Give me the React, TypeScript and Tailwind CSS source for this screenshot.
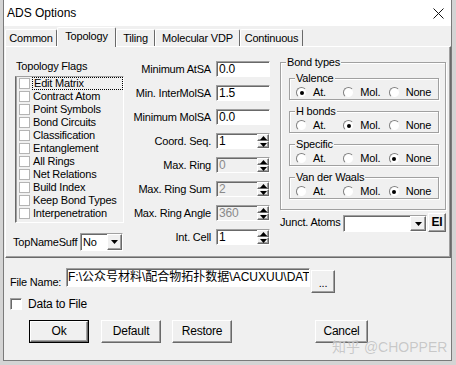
import type { ReactNode } from 'react';

const sunken =
  'border border-t-[#a0a0a0] border-l-[#a0a0a0] border-r-white border-b-white shadow-[inset_1px_1px_0_#696969]';
const raised =
  'border border-t-white border-l-white border-r-[#696969] border-b-[#696969] shadow-[inset_-1px_-1px_0_#a0a0a0]';

const flags = [
  'Edit Matrix',
  'Contract Atom',
  'Point Symbols',
  'Bond Circuits',
  'Classification',
  'Entanglement',
  'All Rings',
  'Net Relations',
  'Build Index',
  'Keep Bond Types',
  'Interpenetration',
];

const fields = [
  { label: 'Minimum AtSA', value: '0.0' },
  { label: 'Min. InterMolSA', value: '1.5' },
  { label: 'Minimum MolSA', value: '0.0' },
  { label: 'Coord. Seq.', value: '1', spin: true },
  { label: 'Max. Ring', value: '0', spin: true, disabled: true },
  { label: 'Max. Ring Sum', value: '2', spin: true, disabled: true },
  { label: 'Max. Ring Angle', value: '360', spin: true, disabled: true },
  { label: 'Int. Cell', value: '1', spin: true },
];

// which radio is checked in each bond group: 0 At., 1 Mol., 2 None
const bonds = [
  { title: 'Valence', on: 0 },
  { title: 'H bonds', on: 1 },
  { title: 'Specific', on: 2 },
  { title: 'Van der Waals', on: 2 },
];

const tabs = [
  { name: 'Common', w: 'w-[52px]' },
  { name: 'Topology', w: 'w-[59px]', active: true },
  { name: 'Tiling', w: 'w-[39px]' },
  { name: 'Molecular VDP', w: 'w-[85px]' },
  { name: 'Continuous', w: 'w-[63px]' },
];

function Down() {
  return (
    <svg width="7" height="4" viewBox="0 0 7 4">
      <path d="M0 0h7L3.5 4z" fill="#000" />
    </svg>
  );
}

function Up() {
  return (
    <svg width="7" height="4" viewBox="0 0 7 4">
      <path d="M0 4h7L3.5 0z" fill="#000" />
    </svg>
  );
}

function Group({ title, className, left, children }: { title: string; className: string; left: string; children?: ReactNode }) {
  return (
    <div className={`relative border border-[#a0a0a0] shadow-[1px_1px_0_#ffffff,inset_1px_1px_0_#ffffff] ${className}`}>
      <span className={`absolute -top-[7px] ${left} bg-[#f0f0f0] px-[1px] leading-[13px] whitespace-nowrap`}>{title}</span>
      {children}
    </div>
  );
}

function Radio({ on, label, w }: { on: boolean; label: string; w: string }) {
  return (
    <div className={`flex items-center ${w}`}>
      <span className="w-[11px] h-[11px] rounded-full bg-white border border-t-[#808080] border-l-[#808080] border-r-[#f0f0f0] border-b-[#f0f0f0] flex items-center justify-center">
        {on && <span className="w-[4px] h-[4px] rounded-full bg-black" />}
      </span>
      <span className="ml-[6px]">{label}</span>
    </div>
  );
}

function Button({ label, w, primary }: { label: string; w: string; primary?: boolean }) {
  return (
    <div className={`${w} h-[23px] ${primary ? 'border border-black' : ''}`}>
      <div className={`w-full h-full bg-[#f0f0f0] ${raised} flex items-center justify-center text-[12px]`}>{label}</div>
    </div>
  );
}

export default function App() {
  return (
    <div className="w-[456px] h-[365px] bg-[#d4d4d4] pl-[3px] overflow-hidden relative font-['Liberation_Sans','Noto_Sans_CJK_SC',sans-serif] text-[11px] leading-[13px] text-black tracking-[-0.2px]">
      <div className="w-[449px] h-[361px] bg-[#f0f0f0] border-x border-b border-[#7a7a7a] flex flex-col">
        {/* Title bar */}
        <div className="h-[26px] bg-white flex items-center justify-between shrink-0">
          <span className="pl-[3px] text-[12px] tracking-normal">ADS Options</span>
          <div className="w-[26px] h-full flex items-center justify-center">
            <svg width="11" height="11" viewBox="0 0 11 11">
              <path d="M0.5 0.5l10 10M10.5 0.5l-10 10" stroke="#111" strokeWidth="1" />
            </svg>
          </div>
        </div>

        {/* Tabs */}
        <div className="h-[20px] flex items-end pl-[1px] shrink-0">
          {tabs.map((t) =>
            t.active ? (
              <div
                key={t.name}
                className={`${t.w} h-[20px] -mb-px z-10 bg-[#f0f0f0] border-t border-l border-r border-t-white border-l-white border-r-[#696969] rounded-t-[2px] flex justify-center pt-[2px]`}
              >
                {t.name}
              </div>
            ) : (
              <div
                key={t.name}
                className={`${t.w} h-[17px] border-t border-l border-r border-t-white border-l-white border-r-[#696969] rounded-t-[2px] flex justify-center pt-[2px]`}
              >
                {t.name}
              </div>
            ),
          )}
        </div>

        {/* Tab page */}
        <div className={`ml-[1px] h-[212px] shrink-0 flex pl-[7px] border border-t-white border-l-white border-r-[#696969] border-b-[#696969] shadow-[inset_-1px_-1px_0_#a0a0a0]`}>
          {/* Topology flags */}
          <div className="w-[111px] flex flex-col pt-[13px]">
            <span className="ml-[3px]">Topology Flags</span>
            <div className="mt-[3px] ml-[2px] w-[109px] h-[147px] border border-t-[#a0a0a0] border-l-[#696969] border-r-white border-b-white shadow-[inset_1px_0_0_#a0a0a0] pl-[3px] flex flex-col">
              {flags.map((f, i) => (
                <div key={f} className="h-[13px] flex items-center">
                  <span className="w-[11px] h-[11px] bg-white border border-[#b4b4b4] shrink-0" />
                  {i === 0 ? (
                    <span className="ml-[2px] pl-[1px] flex-1 h-[13px] border border-dotted border-black leading-[11px] whitespace-nowrap">{f}</span>
                  ) : (
                    <span className="ml-[3px] whitespace-nowrap">{f}</span>
                  )}
                </div>
              ))}
            </div>
            <div className="mt-[10px] h-[18px] flex items-center">
              <span className="w-[67px] whitespace-nowrap">TopNameSuff</span>
              <div className={`w-[43px] h-[18px] bg-white ${sunken} flex items-center justify-between pl-[2px]`}>
                <span>No</span>
                <div className={`w-[15px] h-full bg-[#f0f0f0] ${raised} flex items-center justify-center`}>
                  <Down />
                </div>
              </div>
            </div>
          </div>

          {/* Numeric fields */}
          <div className="ml-[6px] w-[140px] flex flex-col pt-[14px] gap-[8px]">
            {fields.map((f) => (
              <div key={f.label} className="h-[16px] flex items-center justify-end">
                <span className="pr-[5px] whitespace-nowrap">{f.label}</span>
                <div
                  className={`w-[54px] h-[16px] ${f.disabled ? 'bg-[#f0f0f0] text-[#8a8a8a]' : 'bg-white'} ${sunken} flex items-center justify-between pl-[2px] text-[12px]`}
                >
                  <span>{f.value}</span>
                  {f.spin && (
                    <div className="w-[12px] h-full flex flex-col">
                      <div className={`flex-1 bg-[#f0f0f0] ${raised} flex items-center justify-center`}>
                        <Up />
                      </div>
                      <div className={`flex-1 bg-[#f0f0f0] ${raised} flex items-center justify-center`}>
                        <Down />
                      </div>
                    </div>
                  )}
                </div>
              </div>
            ))}
          </div>

          {/* Bond types */}
          <div className="ml-[10px] w-[167px] flex flex-col pt-[15px]">
            <Group title="Bond types" className="w-[166px] h-[148px] pt-[15px] pl-[8px] flex flex-col gap-[11px]" left="left-[5px]">
              {bonds.map((b) => (
                <Group key={b.title} title={b.title} className="w-[150px] h-[22px] pl-[6px] pt-[7px] flex items-start" left="left-[5px]">
                  <Radio on={b.on === 0} label="At." w="w-[48px]" />
                  <Radio on={b.on === 1} label="Mol." w="w-[46px]" />
                  <Radio on={b.on === 2} label="None" w="w-[50px]" />
                </Group>
              ))}
            </Group>
            <div className="mt-[3px] h-[19px] flex items-center">
              <span className="w-[63px] whitespace-nowrap">Junct. Atoms</span>
              <div className={`w-[84px] h-[17px] bg-white ${sunken} flex justify-end mt-[2px]`}>
                <div className={`w-[16px] h-full bg-[#f0f0f0] ${raised} flex items-center justify-center`}>
                  <Down />
                </div>
              </div>
              <div className={`ml-[1px] w-[18px] h-[19px] bg-[#f0f0f0] ${raised} flex items-center justify-center font-bold text-[12px]`}>
                EI
              </div>
            </div>
          </div>
        </div>

        {/* File section */}
        <div className="flex flex-col pl-[6px] pt-[10px]">
          <div className="h-[25px] flex items-start">
            <span className="w-[56px] pt-[8px] whitespace-nowrap">File Name:</span>
            <div className={`w-[244px] h-[19px] bg-white ${sunken} pl-[1px] overflow-hidden whitespace-nowrap text-[12px] leading-[17px] tracking-normal`}>
              {'F:\\公众号材料\\配合物拓扑数据\\ACUXUU\\DAT'}
            </div>
            <div className={`ml-[1px] mt-[2px] w-[24px] h-[23px] bg-[#f0f0f0] ${raised} flex items-end justify-center pb-[5px] leading-[8px]`}>
              ...
            </div>
          </div>
          <div className="mt-[5px] h-[12px] flex items-center">
            <span className={`w-[12px] h-[12px] bg-white ${sunken}`} />
            <span className="ml-[6px] text-[12px]">Data to File</span>
          </div>
          <div className="mt-[10px] flex items-center">
            <div className="ml-[19px]">
              <Button label="Ok" w="w-[60px]" primary />
            </div>
            <div className="ml-[12px]">
              <Button label="Default" w="w-[60px]" />
            </div>
            <div className="ml-[11px]">
              <Button label="Restore" w="w-[60px]" />
            </div>
            <div className="ml-[83px]">
              <Button label="Cancel" w="w-[53px]" />
            </div>
          </div>
        </div>
      </div>

      {/* Watermark */}
      <div className="absolute left-[332px] top-[338px] text-[14px] leading-[18px] text-[#c4c4c4] opacity-90 tracking-normal [text-shadow:0_0_1px_#ffffff] whitespace-nowrap">
        知乎 @CHOPPER
      </div>
    </div>
  );
}
